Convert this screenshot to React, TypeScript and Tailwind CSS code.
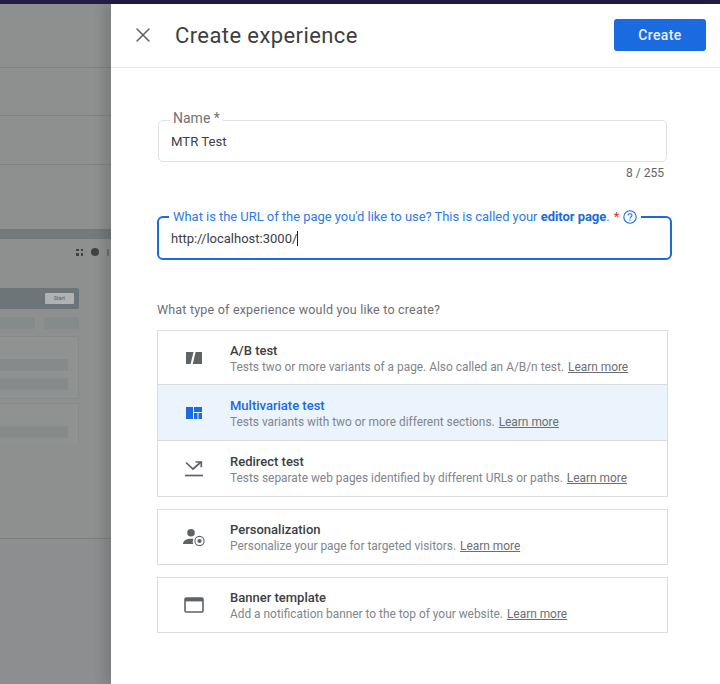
import { X } from "lucide-react";

const font = { fontFamily: "Roboto, sans-serif" };

function LearnMore() {
  return <span className="text-[#6b6f73] underline ml-[4px]">Learn more</span>;
}

function AbIcon() {
  return (
    <svg width="16" height="12" viewBox="0 0 16 12">
      <path d="M0 0h7.5L4.6 12H0z M9.6 0H16v12H6.8z" fill="#5f6368" />
    </svg>
  );
}

function MultiIcon() {
  return (
    <svg width="16" height="12" viewBox="0 0 16 12">
      <path d="M0 0h7v12H0z M8 0h8v5H8z M8 6h3.5v6H8z M12.5 6H16v6h-3.5z" fill="#1a6ae0" />
    </svg>
  );
}

function RedirectIcon() {
  return (
    <svg width="18" height="16" viewBox="0 0 18 16" fill="none" stroke="#5f6368" strokeWidth="1.7">
      <path d="M1 1.5l7 6.5L16 1" />
      <path d="M10.5 1h5.8v5.2" />
      <path d="M0 14.5h18" />
    </svg>
  );
}

function PersonIcon() {
  return (
    <svg width="22" height="17" viewBox="0 0 22 17">
      <circle cx="8" cy="3.8" r="3.8" fill="#5f6368" />
      <path d="M0 15c0-3.4 3.6-5.2 8-5.2 1 0 1.7.1 2.4.2-.7 1.4-.8 3.4-.2 5z" fill="#5f6368" />
      <circle cx="16.5" cy="12" r="4.6" fill="none" stroke="#5f6368" strokeWidth="1.1" />
      <circle cx="16.5" cy="12" r="2.1" fill="#5f6368" />
    </svg>
  );
}

function BannerIcon() {
  return (
    <svg width="20" height="16" viewBox="0 0 20 16" fill="none">
      <rect x="1" y="1" width="18" height="14" rx="1.2" stroke="#5f6368" strokeWidth="1.6" />
      <rect x="1" y="1" width="18" height="3.4" fill="#5f6368" />
    </svg>
  );
}

function Row({
  icon,
  title,
  desc,
  active,
  height = "h-[54px]",
}: {
  icon: React.ReactNode;
  title: string;
  desc: string;
  active?: boolean;
  height?: string;
}) {
  return (
    <div className={`flex items-center ${height} ${active ? "bg-[#ebf3fd]" : "bg-white"}`}>
      <div className="w-[72px] flex justify-center shrink-0">{icon}</div>
      <div className="pt-[2px]">
        <p className={`text-[13px] leading-[16px] font-medium ${active ? "text-[#1a6ae0]" : "text-[#3c4043]"}`}>{title}</p>
        <p className="text-[11.9px] leading-[16px] text-[#80868b]">
          {desc}
          <LearnMore />
        </p>
      </div>
    </div>
  );
}

function Backdrop() {
  return (
    <div className="w-[111px] shrink-0 bg-[#8e9090] flex flex-col overflow-hidden">
      <div className="h-[64px] border-b border-[#808383]" />
      <div className="h-[48px] border-b border-[#808383]" />
      <div className="h-[49px] border-b border-[#808383]" />
      <div className="h-[64px]" />
      <div className="h-[10px] bg-[#737a7c]" />
      <div className="h-[26px] flex items-center justify-end gap-[8px] pr-[2px]">
        <div className="grid grid-cols-2 gap-[2px]">
          <span className="w-[2.5px] h-[2.5px] bg-[#3f4345]" />
          <span className="w-[2.5px] h-[2.5px] bg-[#3f4345]" />
          <span className="w-[2.5px] h-[2.5px] bg-[#3f4345]" />
          <span className="w-[2.5px] h-[2.5px] bg-[#3f4345]" />
        </div>
        <span className="w-[8px] h-[8px] rounded-full bg-[#3f4345]" />
        <span className="w-[2px] h-[7px] bg-[#6c7071]" />
      </div>
      <div className="h-[23px]" />
      <div className="mr-[32px] h-[21px] bg-[#6c7579] rounded-r-[2px] flex items-center justify-end pr-[5px]">
        <div className="w-[29px] h-[11px] bg-[#b0b2b2] rounded-[1px] flex items-center justify-center text-[5px] text-[#55595b]">
          Start
        </div>
      </div>
      <div className="h-[8px]" />
      <div className="mr-[32px] h-[12px] flex gap-[9px]">
        <div className="flex-1 bg-[#858a8b] rounded-r-[2px]" />
        <div className="w-[35px] bg-[#858a8b] rounded-[2px]" />
      </div>
      <div className="h-[7px]" />
      <div className="mr-[32px] h-[63px] border-y border-r border-[#868a8a] rounded-r-[2px] bg-[#909292] flex flex-col justify-end gap-[7px] pb-[8px] pr-[10px]">
        <div className="h-[12px] bg-[#868a8b]" />
        <div className="h-[12px] bg-[#868a8b]" />
      </div>
      <div className="h-[4px]" />
      <div className="mr-[32px] h-[41px] border-t border-r border-[#868a8a] bg-[#909292] flex flex-col justify-end pb-[6px] pr-[10px]">
        <div className="h-[12px] bg-[#868a8b]" />
      </div>
      <div className="h-[95px] border-b border-[#7c7f7f]" />
      <div className="flex-1 bg-[#8d8e90]" />
    </div>
  );
}

export default function App() {
  return (
    <div className="h-[684px] w-[720px] flex flex-col overflow-hidden bg-white" style={font}>
      <div className="h-[4px] bg-[#241c46] shrink-0" />
      <div className="flex flex-1 min-h-0">
        <Backdrop />
        <div className="flex-1 bg-white shadow-[-8px_0_10px_rgba(0,0,0,0.12)]">
          <header className="h-[64px] border-b border-[#e6e6e6] flex items-center pl-[20px] pr-[14px]">
            <X className="w-[24px] h-[24px] text-[#5f6368] -mt-[1px]" strokeWidth={1.5} />
            <h1 className="ml-[20px] text-[22px] tracking-[0.4px] text-[#3c4043] flex-1 -mt-[1px]">Create experience</h1>
            <button className="mr-[1px] w-[92px] h-[32px] rounded-[3px] bg-[#1a6ae0] text-[14px] tracking-[0.4px] font-medium text-white/90 -mt-[1px]">
              Create
            </button>
          </header>

          <div className="pl-[47px] pr-[49px]">
            <fieldset className="mt-[44px] w-[509px] h-[50px] border border-[#dfe1e5] rounded-[5px] pl-[12px] pt-[4px] text-[13.2px] text-[#3c4043]">
              <legend className="px-[3px] -ml-[1px] -translate-y-[2px] text-[14px] leading-[16px] text-[#6f7376]">Name *</legend>
              MTR Test
            </fieldset>
            <p className="mt-[3px] w-[506px] text-right text-[12px] leading-[16px] text-[#5f6368]">8 / 255</p>

            <fieldset className="mt-[28px] -ml-[1px] w-[515px] h-[51px] border-2 border-[#1a6ae0] rounded-[6px] pl-[12px] pt-[4px] text-[13px] text-[#3c4043]">
              <legend className="px-[4px] -ml-[2px] text-[13px] tracking-[-0.045px] leading-[16px] text-[#2f7ae5] flex items-center">
                What is the URL of the page you'd like to use? This is called your&nbsp;
                <b className="font-bold text-[#1a6ae0]">editor page</b>.&nbsp;
                <span className="text-[#d93025] ml-[1px]">*</span>
                <svg className="ml-[4px]" width="14" height="14" viewBox="0 0 14 14" fill="none" stroke="#1a6ae0" strokeWidth="1.1">
                  <circle cx="7" cy="7" r="6.2" />
                  <path d="M5 5.6c0-1.2.9-1.9 2-1.9s2 .7 2 1.7c0 1.4-2 1.5-2 3" />
                  <path d="M7 9.6v1.2" />
                </svg>
              </legend>
              <span className="inline-flex items-center">
                http://localhost:3000/
                <span className="inline-block w-px h-[15px] bg-[#202124]" />
              </span>
            </fieldset>

            <p className="mt-[42px] -ml-[1px] text-[12.5px] leading-[16px] tracking-[0.2px] text-[#6b6f73]">
              What type of experience would you like to create?
            </p>

            <div className="mt-[12px] -ml-[1px] w-[511px] border border-[#dadce0] divide-y divide-[#dadce0]">
              <Row icon={<AbIcon />} title="A/B test" desc="Tests two or more variants of a page. Also called an A/B/n test." />
              <Row active height="h-[56px]" icon={<MultiIcon />} title="Multivariate test" desc="Tests variants with two or more different sections." />
              <Row height="h-[55px]" icon={<RedirectIcon />} title="Redirect test" desc="Tests separate web pages identified by different URLs or paths." />
            </div>

            <div className="mt-[12px] -ml-[1px] w-[511px] border border-[#dadce0]">
              <Row icon={<PersonIcon />} title="Personalization" desc="Personalize your page for targeted visitors." />
            </div>

            <div className="mt-[12px] -ml-[1px] w-[511px] border border-[#dadce0]">
              <Row icon={<BannerIcon />} title="Banner template" desc="Add a notification banner to the top of your website." />
            </div>
          </div>
        </div>
      </div>
    </div>
  );
}
